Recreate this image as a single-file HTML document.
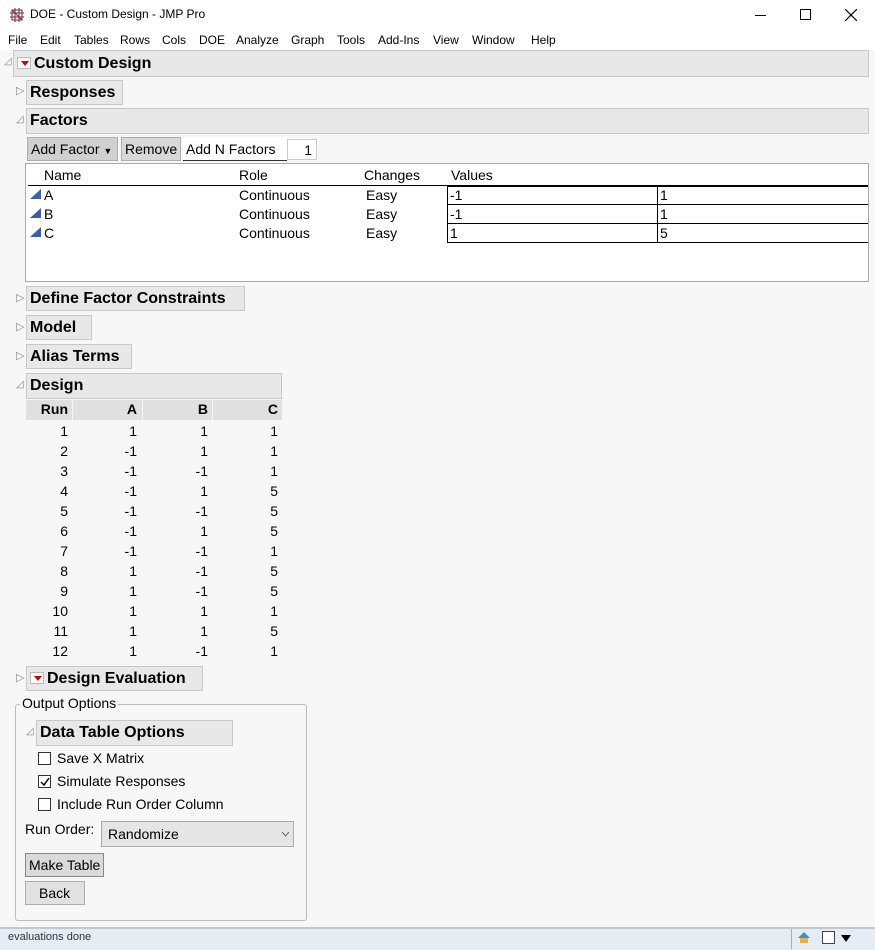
<!DOCTYPE html>
<html><head><style>
*{margin:0;padding:0;box-sizing:border-box}
body{width:875px;height:950px;position:relative;background:#f7f7f7;font-family:"Liberation Sans",sans-serif;font-size:14px;color:#000;overflow:hidden}
.a{position:absolute;white-space:nowrap}
.hdr{position:absolute;background:#e8e8e8;border:1px solid #c8c8c8;font-weight:bold;font-size:16px;padding-left:3px;line-height:23px}
.btn{position:absolute;background:#e1e1e1;border:1px solid #adadad;font-size:14px;line-height:22px;padding-left:3px}
.red{position:absolute;width:14px;height:12px;background:#fff;border:1px solid #bbb}
.red:after{content:"";position:absolute;left:3px;top:3px;border-left:4px solid transparent;border-right:4px solid transparent;border-top:5px solid #c00}
.cb{position:absolute;width:13px;height:13px;background:#fff;border:1px solid #333}
.r{position:absolute;text-align:right;font-size:14px}
</style></head><body>
<div class="a" style="left:0;top:0;width:875px;height:50px;background:#fff"></div>
<svg class="a" style="left:9px;top:7px" width="16" height="16" viewBox="0 0 16 16"><g fill="none" stroke="#7a2a3a" stroke-width="1"><rect x="3" y="3" width="10" height="10"/><path d="M1 6H15M1 10H15M6 1V15M10 1V15M3 3L13 13"/></g></svg>
<div class="a" style="left:30px;top:7px;font-size:12px">DOE - Custom Design - JMP Pro</div>
<div class="a" style="left:755px;top:15px;width:11px;height:1px;background:#000"></div>
<div class="a" style="left:800px;top:9px;width:11px;height:11px;border:1px solid #000"></div>
<svg class="a" style="left:845px;top:9px" width="12" height="12"><path d="M0 0L12 12M12 0L0 12" stroke="#000" stroke-width="1.2"/></svg>
<div class="a" style="top:33px;font-size:12px;left:0;width:875px">
<span class="a" style="left:8px">File</span><span class="a" style="left:40px">Edit</span><span class="a" style="left:74px">Tables</span><span class="a" style="left:120px">Rows</span><span class="a" style="left:162px">Cols</span><span class="a" style="left:199px">DOE</span><span class="a" style="left:236px">Analyze</span><span class="a" style="left:291px">Graph</span><span class="a" style="left:337px">Tools</span><span class="a" style="left:378px">Add-Ins</span><span class="a" style="left:433px">View</span><span class="a" style="left:472px">Window</span><span class="a" style="left:531px">Help</span></div>

<div class="a" style="left:4px;top:56px;color:#888;font-size:10px">◿</div>
<div class="hdr" style="left:13px;top:50px;width:856px;height:27px;line-height:25px;padding-left:20px">Custom Design</div>
<div class="red" style="left:17px;top:57px"></div>

<div class="a" style="left:16px;top:84px;color:#888;font-size:11px">▷</div>
<div class="hdr" style="left:26px;top:80px;width:97px;height:25px">Responses</div>
<div class="a" style="left:16px;top:114px;color:#888;font-size:10px">◿</div>
<div class="hdr" style="left:26px;top:108px;width:843px;height:26px">Factors</div>

<div class="btn" style="left:27px;top:137px;width:91px;height:24px;background:#d0d0d0">Add Factor <span style="font-size:9px">▼</span></div>
<div class="btn" style="left:121px;top:137px;width:60px;height:24px;background:#d8d8d8">Remove</div>
<div class="a" style="left:183px;top:137px;width:104px;height:24px;border-bottom:1px solid #333;line-height:24px;padding-left:3px;background:#fff">Add N Factors</div>
<div class="a" style="left:287px;top:139px;width:30px;height:21px;background:#fff;border:1px solid #ccc;text-align:right;padding-right:4px;line-height:20px">1</div>

<div class="a" style="left:25px;top:163px;width:844px;height:119px;background:#fff;border:1px solid #aaa"></div>
<div class="a" style="left:28px;top:185px;width:840px;height:1px;background:#000"></div>
<div class="a" style="left:44px;top:167px">Name</div><div class="a" style="left:239px;top:167px">Role</div><div class="a" style="left:364px;top:167px">Changes</div><div class="a" style="left:451px;top:167px">Values</div>
<div class="a" style="left:447px;top:186px;width:421px;height:57px;border:1px solid #000;border-right:none"></div>
<div class="a" style="left:447px;top:204px;width:421px;height:1px;background:#000"></div>
<div class="a" style="left:447px;top:223px;width:421px;height:1px;background:#000"></div>
<div class="a" style="left:657px;top:186px;width:1px;height:57px;background:#000"></div>
<svg class="a" style="left:30px;top:189px" width="12" height="50"><path d="M0 10L11 0V10Z M0 29L11 19V29Z M0 48L11 38V48Z" fill="#3a5fb0"/></svg>
<div class="a" style="left:44px;top:187px">A</div><div class="a" style="left:239px;top:187px">Continuous</div><div class="a" style="left:366px;top:187px">Easy</div><div class="a" style="left:450px;top:187px">-1</div><div class="a" style="left:660px;top:187px">1</div>
<div class="a" style="left:44px;top:206px">B</div><div class="a" style="left:239px;top:206px">Continuous</div><div class="a" style="left:366px;top:206px">Easy</div><div class="a" style="left:450px;top:206px">-1</div><div class="a" style="left:660px;top:206px">1</div>
<div class="a" style="left:44px;top:225px">C</div><div class="a" style="left:239px;top:225px">Continuous</div><div class="a" style="left:366px;top:225px">Easy</div><div class="a" style="left:450px;top:225px">1</div><div class="a" style="left:660px;top:225px">5</div>

<div class="a" style="left:16px;top:291px;color:#888;font-size:11px">▷</div>
<div class="hdr" style="left:26px;top:286px;width:219px;height:25px">Define Factor Constraints</div>
<div class="a" style="left:16px;top:320px;color:#888;font-size:11px">▷</div>
<div class="hdr" style="left:26px;top:315px;width:66px;height:25px">Model</div>
<div class="a" style="left:16px;top:349px;color:#888;font-size:11px">▷</div>
<div class="hdr" style="left:26px;top:344px;width:106px;height:25px">Alias Terms</div>
<div class="a" style="left:16px;top:379px;color:#888;font-size:10px">◿</div>
<div class="hdr" style="left:26px;top:373px;width:256px;height:26px">Design</div>

<div class="a" style="left:26px;top:400px;width:256px;height:20px;background:#e0e0e0"></div>
<div class="a" style="left:72px;top:400px;width:1px;height:20px;background:#f5f5f5"></div>
<div class="a" style="left:142px;top:400px;width:1px;height:20px;background:#f5f5f5"></div>
<div class="a" style="left:212px;top:400px;width:1px;height:20px;background:#f5f5f5"></div>
<div class="r" style="left:26px;top:401px;width:42px;font-weight:bold">Run</div>
<div class="r" style="left:72px;top:401px;width:65px;font-weight:bold">A</div>
<div class="r" style="left:142px;top:401px;width:66px;font-weight:bold">B</div>
<div class="r" style="left:212px;top:401px;width:66px;font-weight:bold">C</div>
<div id="rows"></div>
<script>
var d=[[1,1,1,1],[2,-1,1,1],[3,-1,-1,1],[4,-1,1,5],[5,-1,-1,5],[6,-1,1,5],[7,-1,-1,1],[8,1,-1,5],[9,1,-1,5],[10,1,1,1],[11,1,1,5],[12,1,-1,1]];
var h='';d.forEach(function(r,i){var t=423+i*20;h+='<div class="r" style="left:26px;top:'+t+'px;width:42px">'+r[0]+'</div><div class="r" style="left:72px;top:'+t+'px;width:65px">'+r[1]+'</div><div class="r" style="left:142px;top:'+t+'px;width:66px">'+r[2]+'</div><div class="r" style="left:212px;top:'+t+'px;width:66px">'+r[3]+'</div>';});
document.getElementById('rows').innerHTML=h;
</script>

<div class="a" style="left:16px;top:671px;color:#888;font-size:11px">▷</div>
<div class="hdr" style="left:26px;top:666px;width:177px;height:25px;padding-left:20px">Design Evaluation</div>
<div class="red" style="left:30px;top:672px"></div>

<div class="a" style="left:15px;top:704px;width:292px;height:217px;border:1px solid #bbb;border-radius:3px"></div>
<div class="a" style="left:20px;top:695px;background:#f7f7f7;padding:0 2px">Output Options</div>
<div class="a" style="left:26px;top:726px;color:#888;font-size:10px">◿</div>
<div class="hdr" style="left:36px;top:720px;width:197px;height:26px">Data Table Options</div>
<div class="cb" style="left:38px;top:752px"></div><div class="a" style="left:57px;top:750px">Save X Matrix</div>
<div class="cb" style="left:38px;top:775px"></div><svg class="a" style="left:40px;top:777px" width="10" height="10"><path d="M1 5L4 8L9 1" stroke="#000" stroke-width="1.5" fill="none"/></svg><div class="a" style="left:57px;top:773px">Simulate Responses</div>
<div class="cb" style="left:38px;top:798px"></div><div class="a" style="left:57px;top:796px">Include Run Order Column</div>
<div class="a" style="left:25px;top:821px">Run Order:</div>
<div class="a" style="left:101px;top:821px;width:193px;height:26px;background:#e5e5e5;border:1px solid #adadad;padding-left:6px;line-height:24px">Randomize<svg class="a" style="left:180px;top:10px" width="7" height="5"><path d="M0 0L3.5 4L7 0" stroke="#666" fill="none"/></svg></div>
<div class="btn" style="left:25px;top:853px;width:79px;height:24px;background:#dadada;border-color:#888">Make Table</div>
<div class="btn" style="left:25px;top:881px;width:60px;height:24px;padding-left:13px">Back</div>

<div class="a" style="left:0;top:927px;width:875px;height:23px;background:#e6ecf4;border-top:2px solid #c0c8d4"></div>
<div class="a" style="left:8px;top:931px;font-size:11px;color:#333">evaluations done</div>
<div class="a" style="left:791px;top:929px;width:1px;height:20px;background:#aab"></div>
<svg class="a" style="left:797px;top:931px" width="14" height="13"><path d="M1 7L7 1L13 7Z" fill="#3b8fd8"/><rect x="3" y="7" width="8" height="5" fill="#e8b040"/></svg>
<div class="a" style="left:822px;top:931px;width:13px;height:13px;background:#fff;border:1px solid #444"></div>
<div class="a" style="left:841px;top:935px;border-left:5px solid transparent;border-right:5px solid transparent;border-top:7px solid #000"></div>
</body></html>
